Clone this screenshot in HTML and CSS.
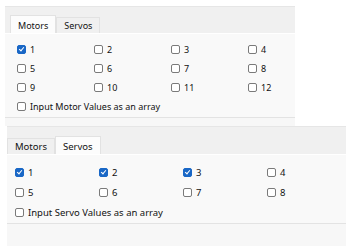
FILE: index.html
```html
<!DOCTYPE html>
<html lang="en">
<head>
  <meta charset="UTF-8" />
  <title>Channels</title>
  <link rel="stylesheet" href="styles.css">
</head>
<body>
  <div class="shot shot-motors">
    <div class="tabs">
      <span class="tab active">Motors</span>
      <span class="tab">Servos</span>
    </div>
    <div class="panel">
      <div class="grid">
        <label class="check"><span class="box on"></span>1</label>
        <label class="check"><span class="box"></span>2</label>
        <label class="check"><span class="box"></span>3</label>
        <label class="check"><span class="box"></span>4</label>
        <label class="check"><span class="box"></span>5</label>
        <label class="check"><span class="box"></span>6</label>
        <label class="check"><span class="box"></span>7</label>
        <label class="check"><span class="box"></span>8</label>
        <label class="check"><span class="box"></span>9</label>
        <label class="check"><span class="box"></span>10</label>
        <label class="check"><span class="box"></span>11</label>
        <label class="check"><span class="box"></span>12</label>
      </div>
      <label class="check"><span class="box"></span>Input Motor Values as an array</label>
    </div>
    <div class="under"></div>
  </div>

  <div class="shot shot-servos">
    <div class="tabs">
      <span class="tab">Motors</span>
      <span class="tab active">Servos</span>
    </div>
    <div class="panel">
      <div class="grid">
        <label class="check"><span class="box on"></span>1</label>
        <label class="check"><span class="box on"></span>2</label>
        <label class="check"><span class="box on"></span>3</label>
        <label class="check"><span class="box"></span>4</label>
        <label class="check"><span class="box"></span>5</label>
        <label class="check"><span class="box"></span>6</label>
        <label class="check"><span class="box"></span>7</label>
        <label class="check"><span class="box"></span>8</label>
      </div>
      <label class="check"><span class="box"></span>Input Servo Values as an array</label>
    </div>
    <div class="under"></div>
  </div>
</body>
</html>
```

FILE: styles.css
```css
* { box-sizing: border-box; }
body, html {
  margin: 0;
  padding: 0;
  background: #fff;
  color: #111;
  font-family: 'Noto Sans', sans-serif;
}

/* two captures of the same dialog, stacked */
.shot-motors {
  width: 290px;
  margin: 6px 0 0 5px;
  font-size: 9px;
}

.shot-servos {
  width: 339px;
  margin: 0 0 0 7px;
  font-size: 9.5px;
}

.tabs {
  display: flex;
  align-items: flex-end;
  padding: 8px 0 0 5px;
  background: #f0f0f0;
  border-top: 1px solid #e6e6e6;
}

.shot-servos .tabs {
  padding: 9px 0 0 0;
}

.tab {
  padding: 1px 7px 1px;
  line-height: 13px;
  border: 1px solid #e2e2e2;
  border-bottom: none;
  background: #f0f0f0;
}

.tab.active {
  background: #fcfcfc;
  padding-top: 3px;
}

.panel {
  background: #f9f9f9;
  border-top: 1px solid #fff;
  border-bottom: 1px solid #e3e3e3;
  padding: 8px 0 4px 12px;
}

.shot-servos .panel {
  padding: 10px 0 4px 8px;
}

.grid {
  display: grid;
  grid-template-columns: repeat(4, 77px);
  row-gap: 5px;
  margin-bottom: 5px;
}

.shot-servos .grid {
  grid-template-columns: repeat(4, 84px);
  row-gap: 6px;
  margin-bottom: 6px;
}

.check {
  display: flex;
  align-items: center;
  gap: 4px;
  height: 14px;
}

.box {
  width: 9px;
  height: 9px;
  border: 1px solid #7a7a7a;
  border-radius: 2px;
  background: #fff;
  position: relative;
}

.box.on {
  background: #1967c6;
  border-color: #1967c6;
}

.box.on::after {
  content: '';
  position: absolute;
  left: 2px;
  top: 0;
  width: 2px;
  height: 4px;
  border: solid #fff;
  border-width: 0 1px 1px 0;
  transform: rotate(40deg);
}

.under {
  height: 8px;
  background: #f7f7f7;
}

.shot-servos .under {
  height: 24px;
}
```
